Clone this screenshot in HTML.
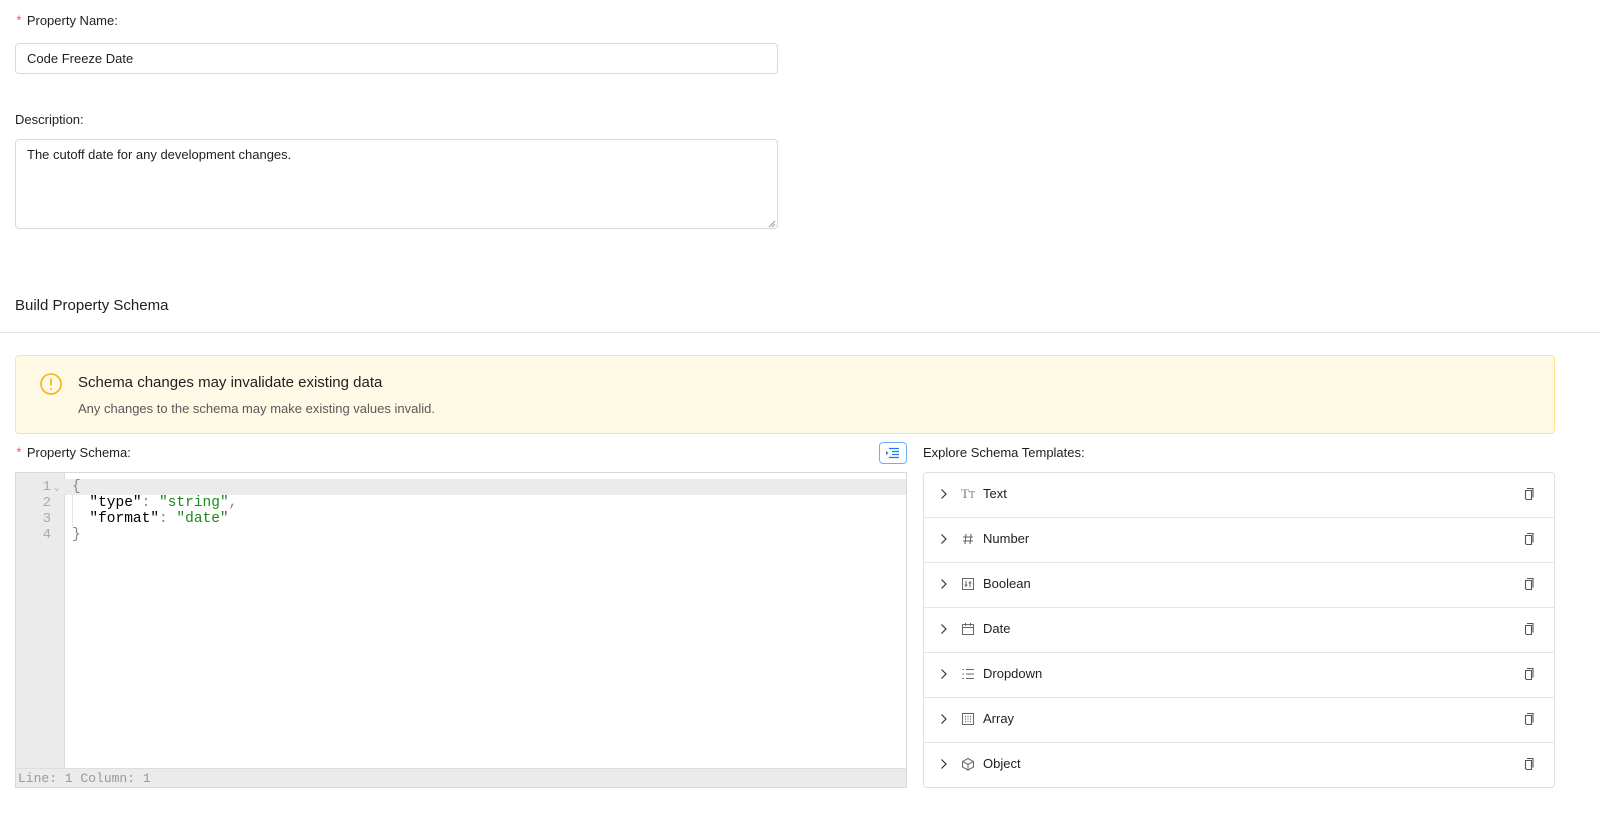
<!DOCTYPE html>
<html><head><meta charset="utf-8"><style>
*{box-sizing:border-box;margin:0;padding:0}
body{width:1600px;height:820px;background:#fff;font-family:"Liberation Sans",sans-serif;font-size:13px;color:#1f1f1f;position:relative;overflow:hidden}
.a{position:absolute}
.lbl{font-size:13px;color:#1f1f1f}
.req{color:#ff4d4f;margin-right:4px;font-family:"Liberation Mono",monospace}
.inp{border:1px solid #d9d9d9;border-radius:4px;padding:0 11px;color:#1f1f1f;font-size:13px}
.mono{font-family:"Liberation Mono",monospace;font-size:13px}
.row{position:absolute;left:0;right:0;height:45px;border-bottom:1px solid #e5e5e5;display:flex;align-items:center}
.chev{position:absolute;left:17px;top:16px}
.ic{position:absolute;left:38px;top:15px}
.rt{position:absolute;left:60px;top:14px;font-size:13px}
.cp{position:absolute;right:20px;top:15px}
</style></head><body>
<div class="a lbl" style="left:15px;top:13px"><span class="req">*</span>Property Name:</div>
<div class="a inp" style="left:15px;top:43px;width:763px;height:31px;line-height:29px">Code Freeze Date</div>
<div class="a lbl" style="left:15px;top:112px">Description:</div>
<div class="a inp" style="left:15px;top:139px;width:763px;height:90px;padding-top:6px;line-height:18px">The cutoff date for any development changes.</div>
<svg class="a" style="left:768px;top:220px" width="8" height="8"><path d="M1 7L7 1M4 7L7 4" stroke="#999" stroke-width="1"/></svg>
<div class="a" style="left:15px;top:297px;font-size:15px;color:#1f1f1f">Build Property Schema</div>
<div class="a" style="left:0;top:332px;width:1600px;height:1px;background:#e5e5e5"></div>
<div class="a" style="left:15px;top:355px;width:1540px;height:79px;background:#fffae6;border:1px solid #ffe58f;border-radius:4px"></div>
<svg class="a" style="left:39px;top:372px" width="24" height="24"><circle cx="12" cy="12" r="10" fill="none" stroke="#faad14" stroke-width="1.6"/><path d="M12 6.5v7" stroke="#faad14" stroke-width="1.6"/><circle cx="12" cy="16.8" r="1" fill="#faad14"/></svg>
<div class="a" style="left:78px;top:374px;font-size:15px;color:#1f1f1f">Schema changes may invalidate existing data</div>
<div class="a" style="left:78px;top:401px;font-size:13px;color:#595959">Any changes to the schema may make existing values invalid.</div>
<div class="a lbl" style="left:15px;top:445px"><span class="req">*</span>Property Schema:</div>
<div class="a" style="left:879px;top:442px;width:28px;height:22px;border:1px solid #69b1ff;border-radius:4px"></div>
<svg class="a" style="left:885px;top:447px" width="16" height="12"><path d="M4 1.5h10M7 4.5h7M7 7.5h7M4 10.5h10" stroke="#1677ff" stroke-width="1.2"/><path d="M1 4L3.5 6L1 8Z" fill="#1677ff"/></svg>
<div class="a lbl" style="left:923px;top:445px">Explore Schema Templates:</div>
<div class="a" style="left:15px;top:472px;width:892px;height:316px;border:1px solid #d9d9d9;overflow:hidden">
 <div class="a" style="left:0;top:0;width:49px;height:295px;background:#ebebeb;border-right:1px solid #ddd"></div>
 <div class="a" style="left:0;top:6px;width:892px;height:16px;background:#ebebeb"></div>
 <div class="a mono" style="left:0;top:6px;width:49px;color:#aaa;line-height:16px;text-align:right;padding-right:14px;font-size:14px">1<br>2<br>3<br>4</div>
 <div class="a mono" style="left:38px;top:6px;color:#aaa;font-size:9px;line-height:18px">⌄</div>
 <div class="a mono" style="left:56px;top:6px;line-height:16px;color:#000;white-space:pre;font-size:14.5px"><span style="color:#888">{</span>
  "type"<span style="color:#888">:</span> <span style="color:#1a8a1a">"string"</span><span style="color:#888">,</span>
  "format"<span style="color:#888">:</span> <span style="color:#1a8a1a">"date"</span>
<span style="color:#888">}</span></div>
 <div class="a" style="left:56px;top:22px;width:1px;height:32px;background:#e5e5e5"></div>
 <div class="a mono" style="left:0;top:295px;width:892px;height:21px;background:#ebebeb;border-top:1px solid #ddd;color:#999;padding-left:2px;line-height:20px">Line: 1  Column: 1</div>
</div>
<div class="a" style="left:923px;top:472px;width:632px;height:316px;border:1px solid #e0e0e0;border-radius:4px">
<div class="row" style="top:0"></div><div class="row" style="top:45px"></div><div class="row" style="top:90px"></div><div class="row" style="top:135px"></div><div class="row" style="top:180px"></div><div class="row" style="top:225px"></div><div class="row" style="top:270px;border:none"></div>
</div>
<div class="a" style="left:923px;top:472px;width:632px;height:316px">
 <div class="a" style="left:0;top:0;width:632px;height:45px">
  <svg class="chev" width="8" height="12"><path d="M1.5 1.5L6 6L1.5 10.5" fill="none" stroke="#333" stroke-width="1.2"/></svg>
  <div class="ic" style="font-size:13px;color:#777;top:14px;font-family:'Liberation Serif',serif">T<span style="font-size:10px">T</span></div>
  <div class="rt">Text</div>
  <svg class="cp" width="12" height="14"><path d="M2.5 3.5h6v9h-5l-1-1z" fill="none" stroke="#555" stroke-width="1.1"/><path d="M4 1.5h6v9" fill="none" stroke="#555" stroke-width="1.1"/></svg>
 </div>
 <div class="a" style="left:0;top:45px;width:632px;height:45px">
  <svg class="chev" width="8" height="12"><path d="M1.5 1.5L6 6L1.5 10.5" fill="none" stroke="#333" stroke-width="1.2"/></svg>
  <svg class="ic" width="14" height="14"><path d="M5 2L4 12M10 2L9 12M2 5h10M2 9h10" stroke="#666" stroke-width="1.1"/></svg>
  <div class="rt">Number</div>
  <svg class="cp" width="12" height="14"><path d="M2.5 3.5h6v9h-5l-1-1z" fill="none" stroke="#555" stroke-width="1.1"/><path d="M4 1.5h6v9" fill="none" stroke="#555" stroke-width="1.1"/></svg>
 </div>
 <div class="a" style="left:0;top:90px;width:632px;height:45px">
  <svg class="chev" width="8" height="12"><path d="M1.5 1.5L6 6L1.5 10.5" fill="none" stroke="#333" stroke-width="1.2"/></svg>
  <svg class="ic" width="14" height="14"><rect x="1.5" y="1.5" width="11" height="11" fill="none" stroke="#666"/><path d="M5 4v6M9 4v6M3.5 8h3M7.5 6h3" stroke="#666"/></svg>
  <div class="rt">Boolean</div>
  <svg class="cp" width="12" height="14"><path d="M2.5 3.5h6v9h-5l-1-1z" fill="none" stroke="#555" stroke-width="1.1"/><path d="M4 1.5h6v9" fill="none" stroke="#555" stroke-width="1.1"/></svg>
 </div>
 <div class="a" style="left:0;top:135px;width:632px;height:45px">
  <svg class="chev" width="8" height="12"><path d="M1.5 1.5L6 6L1.5 10.5" fill="none" stroke="#333" stroke-width="1.2"/></svg>
  <svg class="ic" width="14" height="14"><rect x="1.5" y="2.5" width="11" height="10" fill="none" stroke="#666"/><path d="M1.5 5.5h11M4.5 1v3M9.5 1v3" stroke="#666"/></svg>
  <div class="rt">Date</div>
  <svg class="cp" width="12" height="14"><path d="M2.5 3.5h6v9h-5l-1-1z" fill="none" stroke="#555" stroke-width="1.1"/><path d="M4 1.5h6v9" fill="none" stroke="#555" stroke-width="1.1"/></svg>
 </div>
 <div class="a" style="left:0;top:180px;width:632px;height:45px">
  <svg class="chev" width="8" height="12"><path d="M1.5 1.5L6 6L1.5 10.5" fill="none" stroke="#333" stroke-width="1.2"/></svg>
  <svg class="ic" width="14" height="14"><path d="M5 2.5h8M5 7h8M5 11.5h8M1.5 2.5h1.5M1.5 7h1.5M1.5 11.5h1.5" stroke="#666"/></svg>
  <div class="rt">Dropdown</div>
  <svg class="cp" width="12" height="14"><path d="M2.5 3.5h6v9h-5l-1-1z" fill="none" stroke="#555" stroke-width="1.1"/><path d="M4 1.5h6v9" fill="none" stroke="#555" stroke-width="1.1"/></svg>
 </div>
 <div class="a" style="left:0;top:225px;width:632px;height:45px">
  <svg class="chev" width="8" height="12"><path d="M1.5 1.5L6 6L1.5 10.5" fill="none" stroke="#333" stroke-width="1.2"/></svg>
  <svg class="ic" width="14" height="14"><rect x="1.5" y="1.5" width="11" height="11" fill="none" stroke="#666"/><path d="M4 4.5h1M6.5 4.5h1M9 4.5h1M4 7h1M6.5 7h1M9 7h1M4 9.5h1M6.5 9.5h1M9 9.5h1" stroke="#666" stroke-width="1.2"/></svg>
  <div class="rt">Array</div>
  <svg class="cp" width="12" height="14"><path d="M2.5 3.5h6v9h-5l-1-1z" fill="none" stroke="#555" stroke-width="1.1"/><path d="M4 1.5h6v9" fill="none" stroke="#555" stroke-width="1.1"/></svg>
 </div>
 <div class="a" style="left:0;top:270px;width:632px;height:45px">
  <svg class="chev" width="8" height="12"><path d="M1.5 1.5L6 6L1.5 10.5" fill="none" stroke="#333" stroke-width="1.2"/></svg>
  <svg class="ic" width="14" height="14"><path d="M7 1.5L12.5 4.5V10L7 13L1.5 10V4.5Z M1.5 4.5L7 7.5L12.5 4.5M7 7.5V13" fill="none" stroke="#666"/></svg>
  <div class="rt">Object</div>
  <svg class="cp" width="12" height="14"><path d="M2.5 3.5h6v9h-5l-1-1z" fill="none" stroke="#555" stroke-width="1.1"/><path d="M4 1.5h6v9" fill="none" stroke="#555" stroke-width="1.1"/></svg>
 </div>
</div>
</body></html>
